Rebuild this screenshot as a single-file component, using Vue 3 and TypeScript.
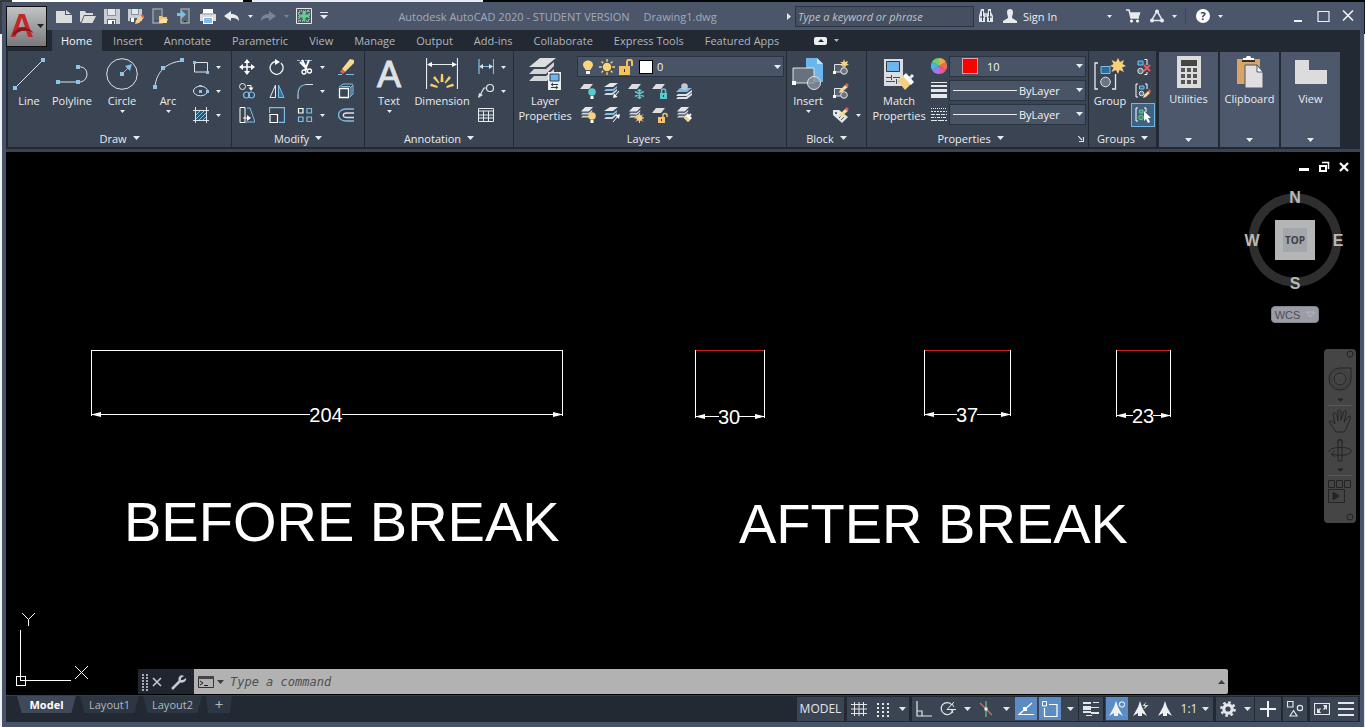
<script setup lang="ts">
import { h, ref } from 'vue'

const Ico = (p: { n: string; s?: number; w?: number }) =>
  h('svg', { width: p.w ?? p.s ?? 16, height: p.s ?? 16, 'aria-hidden': 'true' }, [h('use', { href: '#' + p.n })])
Ico.props = ['n', 's', 'w']

const Tri = (p: { big?: boolean }) =>
  h('svg', { width: p.big ? 7 : 5, height: p.big ? 4 : 3, viewBox: '0 0 8 5', preserveAspectRatio: 'none', 'aria-hidden': 'true' }, [
    h('path', { d: 'M0 0H8L4 5Z', fill: 'currentColor' }),
  ])
Tri.props = { big: Boolean }

const activeTab = ref('Home')
const menuTabs = ['Home', 'Insert', 'Annotate', 'Parametric', 'View', 'Manage', 'Output', 'Add-ins', 'Collaborate', 'Express Tools', 'Featured Apps']

const quick = [
  { n: 'q-new', label: 'New' },
  { n: 'q-open', label: 'Open' },
  { n: 'q-save', label: 'Save' },
  { n: 'q-saveas', label: 'Save As' },
  { n: 'q-web', label: 'Open from Web & Mobile' },
  { n: 'q-toweb', label: 'Save to Web & Mobile' },
  { n: 'q-print', label: 'Plot' },
]
const drawBig = [
  { n: 'd-line', label: 'Line', cls: 'w42', drop: false },
  { n: 'd-pline', label: 'Polyline', cls: 'w44', drop: false },
  { n: 'd-circle', label: 'Circle', cls: 'w56', drop: true },
  { n: 'd-arc', label: 'Arc', cls: 'w36', drop: true },
]
const drawSmall = [
  { n: 'd-rect', label: 'Rectangle' },
  { n: 'd-ellipse', label: 'Ellipse' },
  { n: 'd-hatch', label: 'Hatch' },
]
const modify = [
  { n: 'm-move', label: 'Move', drop: false },
  { n: 'm-rotate', label: 'Rotate', drop: false },
  { n: 'm-trim', label: 'Trim', drop: true },
  { n: 'm-erase', label: 'Erase', drop: false },
  { n: 'm-copy', label: 'Copy', drop: false },
  { n: 'm-mirror', label: 'Mirror', drop: false },
  { n: 'm-fillet', label: 'Fillet', drop: true },
  { n: 'm-explode', label: 'Explode', drop: false },
  { n: 'm-stretch', label: 'Stretch', drop: false },
  { n: 'm-scale', label: 'Scale', drop: false },
  { n: 'm-array', label: 'Array', drop: true },
  { n: 'm-offset', label: 'Offset', drop: false },
]
const layerTools = ['l-off', 'l-isolate', 'l-freeze', 'l-lock', 'l-current', 'l-on', 'l-unisolate', 'l-thaw', 'l-unlock', 'l-match']
const collapsed = [
  { n: 'c-calc', label: 'Utilities' },
  { n: 'c-clip', label: 'Clipboard' },
  { n: 'c-view', label: 'View' },
]
const layouts = ['Model', 'Layout1', 'Layout2']
const activeLayout = ref('Model')

interface Dim { x1: number; x2: number; y: number; text: string; top: string; gap: number }
const dims: Dim[] = [
  { x1: 91, x2: 562, y: 414, text: '204', top: '#fff', gap: 16 },
  { x1: 695, x2: 764, y: 416, text: '30', top: '#c8201e', gap: 10 },
  { x1: 924, x2: 1010, y: 414, text: '37', top: '#c8201e', gap: 10 },
  { x1: 1116, x2: 1170, y: 415, text: '23', top: '#c8201e', gap: 10 },
]
const mid = (d: Dim) => Math.floor((d.x1 + d.x2) / 2)
</script>

<template>
  <svg class="defs" width="0" height="0" aria-hidden="true">
    <defs>
      <symbol id="q-new" viewBox="0 0 16 16"><path d="M0 3H9V7H16V15H0Z" fill="#dcdcdc" /><path d="M10 2L15 6H10Z" fill="#dcdcdc" /></symbol>
      <symbol id="q-open" viewBox="0 0 16 16"><path d="M0 3H5L6 5H13V7H4L1 14H0Z" fill="#dcdcdc" /><path d="M4.500 8H16L12.500 15H1.500Z" fill="#dcdcdc" /></symbol>
      <symbol id="q-save" viewBox="0 0 16 16"><path d="M0 1H16V16H0Z" fill="#c9cdd2" /><path d="M3 1H12V8H3Z" fill="#8a919c" /><path d="M4 1H11V7H4Z" fill="#e4e6e8" /><path d="M3 11H12V16H3Z" fill="#5d6675" /><path d="M4 12H11V16H4Z" fill="#fff" /><path d="M8 13H10V16H8Z" fill="#4a5468" /></symbol>
      <symbol id="q-saveas" viewBox="0 0 16 16"><path d="M0 1H14V13H0Z" fill="#c9cdd2" /><path d="M3 1H11V7H3Z" fill="#8a919c" /><path d="M4 1H10V6H4Z" fill="#e4e6e8" /><path d="M2 10H9V14H2Z" fill="#4d586a" /><path d="M3 10H6V14H3Z" fill="#fff" /><path d="M7 16L8 12.500L13 7L16 9.500L11 15Z" fill="#f6d08a" /><path d="M12.500 7.500L14 6L16.500 8.500L15 10Z" fill="#e8585a" /></symbol>
      <symbol id="q-web" viewBox="0 0 16 16"><path d="M1 1H10V15H1Z" fill="none" stroke="#9aa0a8" stroke-width="1.500" /><path d="M2 2H9V12H2Z" fill="#59616e" /><path d="M7 8H10L11 9H15V15H7Z" fill="#f3c26b" /><path d="M9 11H16L14 15H7Z" fill="#ffe1a0" /></symbol>
      <symbol id="q-toweb" viewBox="0 0 16 16"><path d="M5 1H13V15H5Z" fill="#59616e" stroke="#9aa0a8" stroke-width="1.500" /><path d="M8 13.500H10" stroke="#222" /><path d="M1 5H5V2L10 6.500L5 11V8H1Z" fill="#6fc1f2" /></symbol>
      <symbol id="q-print" viewBox="0 0 16 16"><path d="M3 1H13V5H3Z" fill="#fff" /><path d="M0 6H16V13H0Z" fill="#d9dbde" /><path d="M2 5H14V7H2Z" fill="#b7bbc2" /><path d="M3 9H13V16H3Z" fill="#fff" /><path d="M4 10H12V15H4Z" fill="#7fbde8" /></symbol>
      <symbol id="q-undo" viewBox="0 0 16 16"><path d="M0 8L7 3V6C12 6 15 8 15 13C13 10.500 11 10 7 10V13Z" fill="currentColor" /></symbol>
      <symbol id="q-redo" viewBox="0 0 16 16"><path d="M16 8L9 3V6C4 6 1 8 1 13C3 10.500 5 10 9 10V13Z" fill="currentColor" /></symbol>
      <symbol id="q-preview" viewBox="0 0 16 16"><path d="M.5 .5H15.500V15.500H.5Z" fill="#4b5c60" stroke="#e4e8ea" /><path d="M2 6L6 2M2 11L4 9M11 14L14 11M9 5L13 2M2 14L5 11M12 8L14 6M3 3H13V13H3Z" stroke="#cfd6d8" stroke-dasharray="1 1" fill="none" /><path d="M6.500 3H9.500V6.500H13V9.500H9.500V13H6.500V9.500H3V6.500H6.500Z" fill="#5fce94" /></symbol>
      <symbol id="q-more" viewBox="0 0 10 10"><path d="M1 1H9V2H1ZM1 4H9L5 8Z" fill="#e4e8ee" /></symbol>
      <symbol id="t-find" viewBox="0 0 16 16"><path d="M3 1H6V4L7 6V14H1V8ZM10 1H13V4L15 8V14H9V6L10 4Z" fill="#e2e5ea" /><path d="M7 5H9V9H7Z" fill="#b6bcc8" /><path d="M2 9H6M10 9H14M4.500 3V13M11.500 3V13" stroke="#39424f" /></symbol>
      <symbol id="t-user" viewBox="0 0 16 16"><path d="M5 4C5 0 11 0 11 4C11 7 10 7 10 10L15 13V15H1V13L6 10C6 7 5 7 5 4Z" fill="#e8eaee" /></symbol>
      <symbol id="t-cart" viewBox="0 0 16 16"><path d="M1 2H4L6 10H14M5 5H14.500L13 9H6" fill="none" stroke="#e8eaee" stroke-width="1.500" /><path d="M5 5H15L13 9H6Z" fill="#e8eaee" /><circle cx="6.500" cy="13" r="1.500" fill="#fff" /><circle cx="12.500" cy="13" r="1.500" fill="#fff" /></symbol>
      <symbol id="t-share" viewBox="0 0 16 16"><path d="M8 3L13.500 12.500H2.500Z" fill="none" stroke="#dfe3ea" stroke-width="1.500" /><circle cx="8" cy="3.500" r="2" fill="#e8eaee" /><circle cx="3" cy="12.500" r="2" fill="#e8eaee" /><circle cx="13" cy="12.500" r="2" fill="#e8eaee" /></symbol>
      <symbol id="d-line" viewBox="0 0 32 32"><path d="M2 30L30 2" stroke="#dfe3e8" /><path d="M0 28H4V32H0ZM28 0H32V4H28Z" fill="#8ac6ec" /></symbol>
      <symbol id="d-pline" viewBox="0 0 32 32"><path d="M2 24H21M22 9C34 7 34 25 22 24" stroke="#dfe3e8" fill="none" /><path d="M0 22H4V26H0ZM20 22H24V26H20ZM20 7H24V11H20Z" fill="#8ac6ec" /></symbol>
      <symbol id="d-circle" viewBox="0 0 32 32"><circle cx="16" cy="16" r="15.300" fill="none" stroke="#dfe3e8" /><path d="M16 16L24 8" stroke="#7cc0ea" /><path d="M26 6L24 13L19 8Z" fill="#7cc0ea" /><path d="M14 14H18V18H14Z" fill="#8ac6ec" /></symbol>
      <symbol id="d-arc" viewBox="0 0 32 32"><path d="M3 29C4 14 15 4 30 3" stroke="#dfe3e8" fill="none" /><path d="M1 27H5V31H1ZM9 8H13V12H9ZM28 0H32V4H28Z" fill="#8ac6ec" /></symbol>
      <symbol id="d-rect" viewBox="0 0 16 16"><path d="M2 3.500H14.500V13H1.500V5" fill="none" stroke="#dfe3e8" /><path d="M0 2H3V5H0ZM13 12H16V15H13Z" fill="#8ac6ec" /></symbol>
      <symbol id="d-ellipse" viewBox="0 0 16 16"><ellipse cx="7.500" cy="8" rx="7" ry="4.800" fill="none" stroke="#dfe3e8" /><path d="M6 7H9V10H6ZM6 2H9V4H6ZM13 7H16V10H13Z" fill="#8ac6ec" /></symbol>
      <symbol id="d-hatch" viewBox="0 0 16 16"><path d="M3 4H13V13H3Z" fill="#33566f" /><path d="M3 8L7 4M3 12L11 4M6 13L13 6M10 13L13 10" stroke="#7cc0ea" /><path d="M2.500 0V16M13.500 0V16M0 3.500H16M0 13.500H16" stroke="#dfe3e8" /></symbol>
      <symbol id="m-move" viewBox="0 0 16 16"><path d="M8 2V14M2 8H14" stroke="#fff" stroke-width="1.500" /><path d="M8 0L11 4H5ZM8 16L11 12H5ZM0 8L4 5V11ZM16 8L12 5V11Z" fill="#fff" /></symbol>
      <symbol id="m-rotate" viewBox="0 0 16 16"><path d="M6 2.500A6.500 6.500 0 1 0 12 4" fill="none" stroke="#f2f4f6" stroke-width="1.300" /><path d="M6 0L11 3L6 6Z" fill="#fff" /></symbol>
      <symbol id="m-trim" viewBox="0 0 16 16"><path d="M0 1.500H16" stroke="#7cc0ea" stroke-dasharray="3 1" /><path d="M5 1L10 11M12 1L8 11" stroke="#fff" stroke-width="2" /><circle cx="7" cy="13" r="2" fill="none" stroke="#fff" stroke-width="1.300" /><circle cx="12.500" cy="12" r="2" fill="none" stroke="#fff" stroke-width="1.300" /><path d="M3 3L8 8" stroke="#fff" stroke-width="2" /></symbol>
      <symbol id="m-erase" viewBox="0 0 16 16"><path d="M12 0L16 1L16 4L7 13L4 10Z" fill="#f8d78e" /><path d="M4 10L7 13L5 15L2 13Z" fill="#e8595c" /><path d="M0 15.500H4M8 15.500H16" stroke="#7cc0ea" /></symbol>
      <symbol id="m-copy" viewBox="0 0 16 16"><circle cx="3.500" cy="3.500" r="3" fill="none" stroke="#e8eaee" /><path d="M8 2.500H12V5" stroke="#fff" fill="none" /><path d="M9.500 4.500H14.500L12 8Z" fill="#fff" /><circle cx="7.500" cy="12" r="3" fill="none" stroke="#7cc0ea" stroke-width="1.200" /><circle cx="12.500" cy="12" r="3" fill="none" stroke="#7cc0ea" stroke-width="1.200" /></symbol>
      <symbol id="m-mirror" viewBox="0 0 16 16"><path d="M6.500 2V14.500H1Z" fill="none" stroke="#e8eaee" /><path d="M9.500 2V14.500H15Z" fill="#2d709f" stroke="#7cc0ea" /></symbol>
      <symbol id="m-fillet" viewBox="0 0 16 16"><path d="M1 16V11M8 1.500H16" stroke="#dfe3e8" /><path d="M1 11C1 5 4 2 9 1.500" fill="none" stroke="#7cc0ea" stroke-width="1.200" /></symbol>
      <symbol id="m-explode" viewBox="0 0 16 16"><path d="M1.500 5.500H10.500V14.500H1.500Z" fill="none" stroke="#fff" stroke-width="1.300" /><path d="M1 4L5 1H15M12 5L15 2V11L12 14M3.500 3.500H12M13 4V13" fill="none" stroke="#7cc0ea" /></symbol>
      <symbol id="m-stretch" viewBox="0 0 16 16"><path d="M1 .5H6V15.500H1Z" fill="none" stroke="#fff" /><path d="M8 1H11L16 15H6" fill="none" stroke="#7cc0ea" /><path d="M4 11H8" stroke="#fff" /><path d="M8 8L12 11L8 14Z" fill="#fff" /></symbol>
      <symbol id="m-scale" viewBox="0 0 16 16"><path d="M.5 6V.5H15.500V15.500H10" fill="none" stroke="#7cc0ea" stroke-width="1.300" /><path d="M1 7.500H8.500V15.500H1Z" fill="none" stroke="#fff" stroke-width="1.200" /></symbol>
      <symbol id="m-array" viewBox="0 0 16 16"><path d="M1.500 1.500H6V6H1.500Z" fill="none" stroke="#fff" stroke-width="1.200" /><path d="M10 1.500H14.500V6H10ZM1.500 10H6V14.500H1.500ZM10 10H14.500V14.500H10Z" fill="none" stroke="#7cc0ea" stroke-width="1.200" /></symbol>
      <symbol id="m-offset" viewBox="0 0 16 16"><path d="M16 2H8C-2 2-2 14 8 14H16" fill="none" stroke="#7cc0ea" stroke-width="1.300" /><path d="M16 6H9C4 6 4 10.500 9 10.500H16" fill="none" stroke="#dfe3e8" stroke-width="1.300" /></symbol>
      <symbol id="a-dim" viewBox="0 0 32 32"><path d="M.5 0V31M31.500 0V31" stroke="#e8eaee" stroke-width="1.200" /><path d="M2 6.500H30" stroke="#e8eaee" /><path d="M1 6.500L6 4V9ZM31 6.500L26 4V9Z" fill="#fff" /><path d="M15 16H17L17.500 24H14.500ZM7 20L9 18L13.500 24.500L12.500 25.500ZM25 20L23 18L18.500 24.500L19.500 25.500ZM4 28L5 25.500L11.500 28V30ZM28 28L27 25.500L20.500 28V30Z" fill="#f8cf6c" /></symbol>
      <symbol id="a-lin" viewBox="0 0 16 16"><path d="M1 0V15M15.500 0V15" stroke="#7cc0ea" stroke-width="1.200" /><path d="M2 7.500H14" stroke="#7cc0ea" /><path d="M1 7.500L5 5V10ZM15 7.500L11 5V10Z" fill="#cfe5f5" /></symbol>
      <symbol id="a-lead" viewBox="0 0 16 16"><circle cx="12" cy="5" r="3.500" fill="none" stroke="#dfe3e8" stroke-width="1.200" /><path d="M9 5H6L1 14" fill="none" stroke="#dfe3e8" stroke-width="1.200" /><path d="M0 15L1 10L5 12Z" fill="#dfe3e8" /></symbol>
      <symbol id="a-table" viewBox="0 0 16 16"><path d="M.5 1.500H15.500V14.500H.5ZM0 4H16M0 8H16M0 11H16M5.500 4V15M10.500 4V15" fill="none" stroke="#e8eaee" /></symbol>
      <symbol id="stack" viewBox="0 0 16 16"><path d="M6 0H15L10 5H1Z" fill="#e4e6e9" /><path d="M3 6.500H10L14 3V5L10.500 8.500H1ZM3 10H10L14 6.500V8.500L10.500 12H1Z" fill="#cfd3d8" /></symbol>
      <symbol id="l-props" viewBox="0 0 32 32"><path d="M11 0H27L16 9H0Z" fill="#dededf" /><path d="M5 11H17L25 4V8L17 16H0ZM5 18H17L25 11V15L18 23H0Z" fill="#d2d4d7" /><path d="M19 14H32V32H19Z" fill="#eceded" /><path d="M21 16H30V23H21Z" fill="#6cb8ee" stroke="#303a48" /><path d="M22 26.500H29M22 29.500H29" stroke="#303a48" /><path d="M22 26.500L24 24.500V28.500ZM29 29.500L27 27.500V31.500Z" fill="#303a48" /></symbol>
      <symbol id="l-off" viewBox="0 0 16 16"><path d="M4 1H13L9 6H0Z" fill="#dcdee0" /><circle cx="12" cy="9" r="3.800" fill="#57c9cf" /><path d="M10.500 13H13.500V16H10.500Z" fill="#fff" /></symbol>
      <symbol id="l-isolate" viewBox="0 0 16 16"><path d="M6 0H14L9 4H0Z" fill="#e4e6e9" /><path d="M2 6H9L13 3V5L9.500 8H0Z" fill="#79bdea" /><path d="M2 10H8L13 6V8L8.500 12H0Z" fill="#d5d8dc" /><path d="M15 8L11 13" stroke="#fff" /><path d="M9 15L10 10.500L13.500 14Z" fill="#fff" /></symbol>
      <symbol id="l-freeze" viewBox="0 0 16 16"><path d="M4 1H13L9 6H0Z" fill="#dcdee0" /><path d="M11.500 6V16M7 8.500L16 13.500M7 13.500L16 8.500M9.500 7.500H13.500M9.500 14.500H13.500" stroke="#57c9cf" stroke-width="1.500" /></symbol>
      <symbol id="l-lock" viewBox="0 0 16 16"><path d="M4 1H13L9 6H0Z" fill="#dcdee0" /><path d="M8 10H15V16H8Z" fill="#57c9cf" /><path d="M9.500 10V7.500C9.500 5.500 13.500 5.500 13.500 7.500V10" fill="none" stroke="#57c9cf" stroke-width="1.500" /><path d="M11 12H12V14H11Z" fill="#24343c" /></symbol>
      <symbol id="l-current" viewBox="0 0 16 16"><path d="M4 5H16L11 9H0Z" fill="#79bdea" /><path d="M2 11H10L16 7V9L11 13H0ZM2 14H10L16 10V12L11 16H0Z" fill="#dfe3e8" /><circle cx="8.500" cy="3.500" r="3.300" fill="#c3c9d3" /></symbol>
      <symbol id="l-on" viewBox="0 0 16 16"><use href="#stack" width="14" height="16" y="-1" /><circle cx="12" cy="9" r="3.800" fill="#f8d07c" /><path d="M10.500 13H13.500V16H10.500Z" fill="#fff" /></symbol>
      <symbol id="l-unisolate" viewBox="0 0 16 16"><path d="M6 0H14L9 4H0Z" fill="#e4e6e9" /><path d="M2 6H9L13 3V5L9.500 8H0Z" fill="#79bdea" /><path d="M2 10H8L13 6V8L8.500 12H0Z" fill="#d5d8dc" /><path d="M9 15L14 9" stroke="#fff" /><path d="M16 7L15 12L11.500 8.500Z" fill="#fff" /></symbol>
      <symbol id="l-thaw" viewBox="0 0 16 16"><use href="#stack" width="14" height="16" y="-1" /><path d="M11.500 6V16M6.500 11H16M8 7.500L15 14.500M8 14.500L15 7.500" stroke="#f8d07c" /><circle cx="11.500" cy="11" r="3" fill="#f8d07c" /></symbol>
      <symbol id="l-unlock" viewBox="0 0 16 16"><path d="M4 1H13L9 6H0Z" fill="#dcdee0" /><path d="M6 10H13V16H6Z" fill="#f3c26b" /><path d="M11 10V8C11 6 15 6 15 8V10" fill="none" stroke="#f3c26b" stroke-width="1.500" /><path d="M9 12H10V14H9Z" fill="#24343c" /></symbol>
      <symbol id="l-match" viewBox="0 0 16 16"><use href="#stack" width="14" height="16" y="-1" /><path d="M8 11L12 7L16 11L12 15Z" fill="#fff" /><path d="M8 11L10 9L14 13L12 15Z" fill="#f3cf86" /><path d="M13 9L15 7" stroke="#fff" stroke-width="2" /></symbol>
      <symbol id="s-bulb" viewBox="0 0 16 16"><path d="M3 6C3 0 13 0 13 6C13 8 11 9 10.500 11H5.500C5 9 3 8 3 6Z" fill="#fbd47e" /><path d="M6 12H10V15H6Z" fill="#f3f3f3" /></symbol>
      <symbol id="s-sun" viewBox="0 0 16 16"><path d="M8 0V16M0 8H16M2.500 2.500L13.500 13.500M2.500 13.500L13.500 2.500" stroke="#fbd47e" stroke-width="1.300" /><circle cx="8" cy="8" r="5.300" fill="#3f4959" /><circle cx="8" cy="8" r="4.300" fill="#fbd47e" /></symbol>
      <symbol id="s-unlock" viewBox="0 0 16 16"><path d="M1 7H12V16H1Z" fill="#f5c15c" /><path d="M9 7V3C9 0 14 0 14 3V7" fill="none" stroke="#f5c15c" stroke-width="2" /><path d="M6 10H7V13H6Z" fill="#333" /></symbol>
      <symbol id="b-insert" viewBox="0 0 32 32"><path d="M14 0H25L31 6V24H14Z" fill="#6bb7ec" /><path d="M25 0V6H31Z" fill="#c5e2f7" /><path d="M1 10H22V25H1Z" fill="#69717f" stroke="#dfe3e8" /><circle cx="22" cy="25" r="6.500" fill="#8a919d" fill-opacity=".8" stroke="#dfe3e8" /><path d="M0 23H4V27H0Z" fill="#fff" /></symbol>
      <symbol id="blk" viewBox="0 0 16 16"><path d="M1.500 5.500H10V13H1.500Z" fill="#59616e" stroke="#dfe3e8" /><circle cx="11" cy="12" r="3.300" fill="#6c7481" stroke="#dfe3e8" /><path d="M0 12H3V15H0Z" fill="#fff" /></symbol>
      <symbol id="pencil" viewBox="0 0 16 16"><path d="M6 10L7 7L12 2L15 4L9 9Z" fill="#f8d78e" /><path d="M12 2L13.500 0L16 2L14.500 4Z" fill="#e8595c" /></symbol>
      <symbol id="b-create" viewBox="0 0 16 16"><use href="#blk" width="16" height="16" /><path d="M11 0L12 3L15 2L14 4.500L16 6L13 6.500L12 9L10.500 6.500L8 7L9 4.500L7 3L10 3Z" fill="#f8d07c" /></symbol>
      <symbol id="b-edit" viewBox="0 0 16 16"><use href="#blk" width="16" height="16" /><use href="#pencil" width="16" height="16" /></symbol>
      <symbol id="b-attr" viewBox="0 0 16 16"><path d="M0 3H6L15 10L9 16L0 8Z" fill="#e4e6e9" /><circle cx="3" cy="6" r="1" fill="#333" /><path d="M6 11L9 8M8 13L11 10" stroke="#555" /><use href="#pencil" width="16" height="16" /></symbol>
      <symbol id="p-match" viewBox="0 0 32 32"><path d="M1 1H20V28H1Z" fill="#dcdde0" /><path d="M3.500 3.500H16.500V13.500H3.500Z" fill="#6cb8ee" stroke="#303a48" /><path d="M3 19.500H8M10 19.500H17M3 23.500H12M15 23.500H18M8.500 17V22M13.500 21V26" stroke="#444d5a" /><path d="M14 22L21 18L28 26L22 32Z" fill="#f3cf86" /><path d="M20 18L23 15L31 24L28 27Z" fill="#fff" /><path d="M26 21L30 17" stroke="#e8eaee" stroke-width="3" /></symbol>
      <symbol id="p-wheel" viewBox="0 0 16 16"><path d="M8 8L8 0A8 8 0 0 1 15 4Z" fill="#f3a24e" /><path d="M8 8L15 4A8 8 0 0 1 15 12Z" fill="#ef6b4f" /><path d="M8 8L15 12A8 8 0 0 1 8 16Z" fill="#e25a9c" /><path d="M8 8L8 16A8 8 0 0 1 1 12Z" fill="#a478e8" /><path d="M8 8L1 12A8 8 0 0 1 1 4Z" fill="#43b7ea" /><path d="M8 8L1 4A8 8 0 0 1 8 0Z" fill="#6fce6a" /></symbol>
      <symbol id="p-weight" viewBox="0 0 16 16"><path d="M0 0H16V1H0ZM0 3H16V5H0ZM0 7H16V10H0ZM0 12H16V16H0Z" fill="#e4e6e9" /></symbol>
      <symbol id="p-type" viewBox="0 0 16 16"><path d="M0 2.500H16" stroke="#e4e6e9" stroke-dasharray="1 1" /><path d="M0 5.500H16" stroke="#e4e6e9" stroke-dasharray="2 1" /><path d="M0 8.500H16" stroke="#e4e6e9" stroke-dasharray="4 1" /><path d="M0 11.500H16" stroke="#e4e6e9" stroke-dasharray="3 1 1 1" /><path d="M0 14.500H16" stroke="#e4e6e9" stroke-dasharray="6 1" /></symbol>
      <symbol id="g-group" viewBox="0 0 32 32"><path d="M4 5H1V31H4M18 31H21.500V16" fill="none" stroke="#e8eaee" stroke-width="1.300" /><path d="M7 8.500H16V15.500H7Z" fill="#2d6c9a" stroke="#7cc0ea" /><circle cx="11.500" cy="24" r="4.800" fill="#6c7481" stroke="#dfe3e8" /><path d="M24 0L26 4L30 2L28.500 6L32 8L28 9.500L30 14L25.500 12L24 16L22 12L17.500 14L19.500 9.500L16 8L19.500 6L17.500 2L22 4Z" fill="#f8d07c" /></symbol>
      <symbol id="g-un" viewBox="0 0 16 16"><path d="M3 2H8V6H3Z" fill="#2d6c9a" stroke="#7cc0ea" /><circle cx="5.500" cy="12" r="2.700" fill="#6c7481" stroke="#dfe3e8" /><path d="M9.500 .5H12V6M12 13V15.500H9.500" fill="none" stroke="#fff" /><path d="M9 6L15 12M15 6L9 12" stroke="#e8595c" stroke-width="2" /></symbol>
      <symbol id="g-edit" viewBox="0 0 16 16"><path d="M3 1H1V14H3M10 1H12V6" fill="none" stroke="#fff" /><path d="M4.500 3H9V6H4.500Z" fill="#2d6c9a" stroke="#7cc0ea" /><circle cx="6.500" cy="10.500" r="2.300" fill="#6c7481" stroke="#dfe3e8" /><path d="M8 15L9 12L13 8L15 10L11 14Z" fill="#f8d78e" /><path d="M13 8L14 6L16 8L15 10Z" fill="#e8595c" /></symbol>
      <symbol id="g-sel" viewBox="0 0 16 16"><path d="M3 1H1V14H3M9 1H11V5" fill="none" stroke="#fff" /><path d="M4.500 3H8V6H4.500Z" fill="#2f9960" stroke="#58d093" /><circle cx="6" cy="10.500" r="2.300" fill="#2f9960" stroke="#58d093" /><path d="M9 4L16 11H13L15 15L13 16L11 12L9 14Z" fill="#fff" /></symbol>
      <symbol id="c-calc" viewBox="0 0 32 32"><path d="M4 0H28V32H4Z" fill="#dcdcdd" /><path d="M8 4H24V10H8Z" fill="#454545" /><path d="M8 12H12V16H8ZM14 12H18V16H14ZM20 12H24V16H20ZM8 18H12V22H8ZM14 18H18V22H14ZM20 18H24V22H20ZM8 24H12V28H8ZM14 24H18V28H14ZM20 24H24V28H20Z" fill="#555" /></symbol>
      <symbol id="c-clip" viewBox="0 0 32 32"><path d="M3 3H26V28H3Z" fill="#d8a566" /><path d="M9 4V2H12C12-1 17-1 17 2H20V4Z" fill="#fff" /><path d="M8 4H21V6H8Z" fill="#333" /><path d="M11 9H23L29 15V32H11Z" fill="#dfdfe0" stroke="#4a5468" /><path d="M23 9V16H29Z" fill="#fff" stroke="#4a5468" /></symbol>
      <symbol id="c-view" viewBox="0 0 32 32"><path d="M0 4H14V14H32V28H0Z" fill="#dcdcdd" /></symbol>
      <symbol id="w-min" viewBox="0 0 16 16"><path d="M4 12H12V14H4Z" fill="#eef0f3" /></symbol>
      <symbol id="w-max" viewBox="0 0 16 16"><path d="M3 3.500H14V13.500H3Z" fill="none" stroke="#eef0f3" stroke-width="1.200" /></symbol>
      <symbol id="w-close" viewBox="0 0 16 16"><path d="M3 2.500L13 12.500M13 2.500L3 12.500" stroke="#eef0f3" stroke-width="1.700" /></symbol>
      <symbol id="v-min" viewBox="0 0 12 12"><path d="M1 7H11V10H1Z" fill="#fff" /></symbol>
      <symbol id="v-res" viewBox="0 0 12 12"><path d="M2 5H8V10H2Z" fill="none" stroke="#fff" stroke-width="2" /><path d="M4 1.500H10.500V8" fill="none" stroke="#fff" stroke-width="1.500" /></symbol>
      <symbol id="v-close" viewBox="0 0 12 12"><path d="M2 2L10 10M10 2L2 10" stroke="#fff" stroke-width="2.200" /></symbol>
      <symbol id="k-grid" viewBox="0 0 16 16"><path d="M3.500 1V15M8 1V15M12.500 1V15M0 3.500H16M0 8H16M0 12.500H16" stroke="#e4e6e9" /></symbol>
      <symbol id="k-snap" viewBox="0 0 16 16"><path d="M2 3H14M2 7H14M2 11H14M2 15H14" stroke="#e4e6e9" stroke-width="2" stroke-dasharray="2 3" /></symbol>
      <symbol id="k-ortho" viewBox="0 0 16 16"><path d="M1 0V15H16M1 10H6V15" fill="none" stroke="#e4e6e9" stroke-width="1.200" /></symbol>
      <symbol id="k-polar" viewBox="0 0 16 16"><path d="M12 4A6 6 0 1 0 13 9" fill="none" stroke="#e4e6e9" stroke-width="1.200" /><path d="M16 8.500H7L14 1" fill="none" stroke="#e4e6e9" /><path d="M12 3L14 6M11 8L13 12" stroke="#e4e6e9" /></symbol>
      <symbol id="k-iso" viewBox="0 0 16 16"><path d="M2 2L14 14" stroke="#dc6a6c" stroke-width="1.200" /><path d="M8 0V16" stroke="#65c98e" stroke-width="1.200" /><path d="M6.500 6.500H9.500V9.500H6.500Z" fill="#e9f3ec" /></symbol>
      <symbol id="k-track" viewBox="0 0 16 16"><path d="M16 13.500H1L14 2" fill="none" stroke="#fff" stroke-width="1.200" /><path d="M5 6H9V10H5Z" fill="#fff" /></symbol>
      <symbol id="k-osnap" viewBox="0 0 16 16"><path d="M7 3.500H15V15.500H2.500V7" fill="none" stroke="#fff" stroke-width="1.200" /><path d="M.5 .5H4.500V5H.5Z" fill="none" stroke="#fff" /></symbol>
      <symbol id="k-lw" viewBox="0 0 16 16"><path d="M0 1H8V3H0ZM10 1H16V2H10ZM0 5H8V9H0ZM8 6H16V7H8ZM0 10H8V12H0ZM8 11H16V13H8ZM3 14H9V15H3Z" fill="#e4e6e9" /></symbol>
      <symbol id="k-ann" viewBox="0 0 16 16"><path d="M8 0L10 6L15 15L10 12V15H6V12L1 15L6 6Z" fill="#eef0f2" /></symbol>
      <symbol id="k-annv" viewBox="0 0 16 16"><use href="#k-ann" width="16" height="16" x="-1" /><circle cx="13" cy="3.500" r="2.700" fill="#5b8cc4" stroke="#fff" /></symbol>
      <symbol id="k-anna" viewBox="0 0 16 16"><use href="#k-ann" width="16" height="16" x="-1" /><path d="M14 0L9 5H12L10 9L16 4H12Z" fill="#fff" stroke="#3b4453" stroke-width=".5" /></symbol>
      <symbol id="k-gear" viewBox="0 0 16 16"><circle cx="8" cy="8" r="4.200" fill="none" stroke="#e4e6e9" stroke-width="3.200" /><circle cx="8" cy="8" r="6.600" fill="none" stroke="#e4e6e9" stroke-width="2.500" stroke-dasharray="2.600 2.580" /></symbol>
      <symbol id="k-plus" viewBox="0 0 16 16"><path d="M8 0V16M0 8H16" stroke="#eef0f2" stroke-width="2" /></symbol>
      <symbol id="k-iso2" viewBox="0 0 16 16"><path d="M.5 .5H6V6H.5ZM3 15L6.500 9.500L10 15Z" fill="none" stroke="#e4e6e9" stroke-width="1.200" /><circle cx="13" cy="7" r="2.700" fill="none" stroke="#e4e6e9" stroke-width="1.200" /></symbol>
      <symbol id="k-full" viewBox="0 0 16 16"><path d="M.5 2.500H15.500V13.500H.5Z" fill="none" stroke="#e4e6e9" stroke-width="1.200" /><path d="M13 4V9L11.500 7.500L10 9L9 8L10.500 6.500L9 4ZM3 12V7L4.500 8.500L6 7L7 8L5.500 9.500L7 12Z" fill="#e4e6e9" /></symbol>
      <symbol id="k-menu" viewBox="0 0 16 16"><path d="M0 1H16V3H0ZM0 7H16V9H0ZM0 13H16V15H0Z" fill="#e4e6e9" /></symbol>
    </defs>
  </svg>

  <div class="desk">
    <div class="behind"></div>
    <div class="window">
      <header class="head">
        <button class="app" aria-label="Application menu">
          <svg width="39" height="39" viewBox="0 0 39 39" aria-hidden="true">
            <text x="3" y="30" class="logo-a">A</text>
            <path d="M5 28C10 19 18 17 27 26C19 22 13 23 8 28Z" fill="#8a181b" />
            <path d="M30 17H37L33.500 21Z" fill="#222" />
          </svg>
        </button>
        <div class="title-row">
          <button v-for="q in quick" :key="q.n" class="tb" :aria-label="q.label"><Ico :n="q.n" /></button>
          <button class="tb" aria-label="Undo"><Ico n="q-undo" /></button>
          <button class="dd" aria-label="Undo list"><Tri /></button>
          <button class="tb dim" aria-label="Redo"><Ico n="q-redo" /></button>
          <button class="dd dim" aria-label="Redo list"><Tri /></button>
          <button class="tb" aria-label="Preview"><Ico n="q-preview" /></button>
          <button class="dd wide" aria-label="Customize toolbar"><Ico n="q-more" :s="10" /></button>
          <h1 class="title"><span>Autodesk AutoCAD 2020 - STUDENT VERSION</span><span>Drawing1.dwg</span></h1>
          <button class="dd" aria-label="Collapse search"><svg width="4" height="7" viewBox="0 0 4 7"><path d="M0 0L4 3.500L0 7Z" fill="#e4e8ee" /></svg></button>
          <input class="search" type="text" placeholder="Type a keyword or phrase" aria-label="Search" />
          <button class="tb" aria-label="Find"><Ico n="t-find" /></button>
          <button class="sign"><Ico n="t-user" /><span>Sign In</span><Tri class="end" /></button>
          <button class="tb" aria-label="App Store"><Ico n="t-cart" /></button>
          <button class="tb" aria-label="Connect"><Ico n="t-share" /></button>
          <button class="dd slim" aria-label="Connect menu"><Tri /></button>
          <span class="vr"></span>
          <button class="tb" aria-label="Help"><span class="help">?</span></button>
          <button class="dd slim" aria-label="Help menu"><Tri /></button>
          <div class="winbtns">
            <button aria-label="Minimize"><Ico n="w-min" /></button>
            <button aria-label="Maximize"><Ico n="w-max" /></button>
            <button aria-label="Close"><Ico n="w-close" /></button>
          </div>
        </div>
        <nav class="tabs">
          <button v-for="t in menuTabs" :key="t" :class="{ on: t === activeTab }" @click="activeTab = t">{{ t }}</button>
          <button class="pill-btn" aria-label="Minimize ribbon"><span class="pill"><svg width="6" height="3" viewBox="0 0 6 3"><path d="M0 3L3 0L6 3Z" fill="#222933" /></svg></span></button>
          <button class="dd wide" aria-label="Ribbon options"><Tri /></button>
        </nav>
      </header>

      <div class="ribbon">
        <section class="panel p-draw">
          <div class="body">
            <button v-for="b in drawBig" :key="b.n" class="big" :class="b.cls">
              <Ico :n="b.n" :s="32" /><span>{{ b.label }}</span><Tri v-if="b.drop" />
            </button>
            <div class="grid two">
              <template v-for="b in drawSmall" :key="b.n">
                <button :aria-label="b.label"><Ico :n="b.n" /></button>
                <button :aria-label="b.label + ' options'"><Tri /></button>
              </template>
            </div>
          </div>
          <h2>Draw<Tri big /></h2>
        </section>

        <section class="panel p-modify">
          <div class="body">
            <div class="grid four">
              <template v-for="b in modify" :key="b.n">
                <button :aria-label="b.label"><Ico :n="b.n" /></button>
                <button v-if="b.drop" :aria-label="b.label + ' options'"><Tri /></button>
              </template>
            </div>
          </div>
          <h2>Modify<Tri big /></h2>
        </section>

        <section class="panel p-annot">
          <div class="body">
            <button class="big w48">
              <svg class="spill" width="32" height="32" aria-hidden="true"><text x="16" y="29" text-anchor="middle" class="big-a">A</text></svg>
              <span>Text</span><Tri />
            </button>
            <button class="big w58"><Ico n="a-dim" :s="32" /><span>Dimension</span></button>
            <div class="grid two">
              <button aria-label="Linear"><Ico n="a-lin" /></button><button aria-label="Linear options"><Tri /></button>
              <button aria-label="Leader"><Ico n="a-lead" /></button><button aria-label="Leader options"><Tri /></button>
              <button aria-label="Table"><Ico n="a-table" /></button>
            </div>
          </div>
          <h2>Annotation<Tri big /></h2>
        </section>

        <section class="panel p-layers">
          <div class="body">
            <button class="big w62"><Ico n="l-props" :s="32" /><span>Layer Properties</span></button>
            <div class="layer-side">
              <label class="combo layer-combo">
                <Ico n="s-bulb" /><Ico n="s-sun" /><Ico n="s-unlock" /><i class="sw white"></i>
                <select aria-label="Layer"><option>0</option></select><Tri big />
              </label>
              <div class="grid five">
                <button v-for="n in layerTools" :key="n" :aria-label="n"><Ico :n="n" /></button>
              </div>
            </div>
          </div>
          <h2>Layers<Tri big /></h2>
        </section>

        <section class="panel p-block">
          <div class="body">
            <button class="big w42"><Ico n="b-insert" :s="32" /><span>Insert</span><Tri /></button>
            <div class="grid two">
              <button class="row1" aria-label="Create block"><Ico n="b-create" /></button>
              <button class="row2" aria-label="Edit block"><Ico n="b-edit" /></button>
              <button class="row3" aria-label="Edit attributes"><Ico n="b-attr" /></button>
              <button class="row3" aria-label="Attribute options"><Tri /></button>
            </div>
          </div>
          <h2>Block<Tri big /></h2>
        </section>

        <section class="panel p-props">
          <div class="body">
            <button class="big w64"><Ico n="p-match" :s="32" /><span>Match Properties</span></button>
            <div class="prop-grid">
              <Ico n="p-wheel" />
              <label class="combo"><i class="sw red"></i><select aria-label="Color"><option>10</option></select><Tri big /></label>
              <Ico n="p-weight" />
              <label class="combo"><i class="rule"></i><select class="by" aria-label="Lineweight"><option>ByLayer</option></select><Tri big /></label>
              <Ico n="p-type" />
              <label class="combo"><i class="rule"></i><select class="by" aria-label="Linetype"><option>ByLayer</option></select><Tri big /></label>
            </div>
          </div>
          <h2 class="wide-title">Properties<Tri big />
            <svg class="corner" width="6" height="6" viewBox="0 0 6 6"><path d="M0 0L4 4M5.500 1V5.500H1" fill="none" stroke="#dfe3e8" stroke-width="1.200" /></svg>
          </h2>
        </section>

        <section class="panel p-groups">
          <div class="body">
            <button class="big w42"><Ico n="g-group" :s="32" /><span>Group</span></button>
            <div class="grid one">
              <button aria-label="Ungroup"><Ico n="g-un" /></button>
              <button aria-label="Group edit"><Ico n="g-edit" /></button>
              <button class="sel" aria-label="Group selection"><Ico n="g-sel" /></button>
            </div>
          </div>
          <h2>Groups<Tri big /></h2>
        </section>

        <button v-for="c in collapsed" :key="c.n" class="fold">
          <Ico :n="c.n" :s="32" /><span>{{ c.label }}</span><Tri big class="foot" />
        </button>
      </div>

      <main class="canvas">
        <svg class="drawing" width="100%" height="100%" viewBox="6 152 1354 543" preserveAspectRatio="xMinYMin meet">
          <g v-for="d in dims" :key="d.text">
            <g shape-rendering="crispEdges">
              <rect :x="d.x1" y="350" :width="d.x2 - d.x1" height="1" :fill="d.top" />
              <rect :x="d.x1" y="350" width="1" :height="d.y - 348" fill="#fff" />
              <rect :x="d.x2" y="350" width="1" :height="d.y - 348" fill="#fff" />
              <rect :x="d.x1" :y="d.y" :width="mid(d) - d.gap - d.x1" height="1" fill="#fff" />
              <rect :x="mid(d) + d.gap" :y="d.y" :width="d.x2 - mid(d) - d.gap" height="1" fill="#fff" />
            </g>
            <path :d="`M${d.x1} ${d.y + 0.5}l10 -2.500v5zM${d.x2 + 1} ${d.y + 0.5}l-10 -2.500v5z`" fill="#fff" />
            <text :x="mid(d)" :y="d.y + 8" text-anchor="middle" class="dim-text">{{ d.text }}</text>
          </g>
          <text x="124" y="541" class="caption">BEFORE BREAK</text>
          <text x="739" y="543" class="caption">AFTER BREAK</text>
          <g shape-rendering="crispEdges" stroke="#fff" fill="none">
            <path d="M20.500 630V680.500H71M16.500 676.500H25.500V685.500H16.500Z" />
          </g>
          <path d="M22 613L28.500 619.500L35 613M28.500 619.500V626M75 666L88 679M88 666L75 679" stroke="#fff" fill="none" />
        </svg>

        <div class="doc-btns">
          <button aria-label="Minimize drawing"><Ico n="v-min" :s="12" /></button>
          <button aria-label="Restore drawing"><Ico n="v-res" :s="12" /></button>
          <button aria-label="Close drawing"><Ico n="v-close" :s="12" /></button>
        </div>

        <div class="cube">
          <svg width="110" height="110" viewBox="0 0 110 110">
            <circle cx="55" cy="52" r="42" fill="none" stroke="#2e2e2e" stroke-width="9" />
            <rect x="35" y="32" width="40" height="40" fill="#b4b5b6" />
            <rect x="43" y="40" width="24" height="24" fill="#a3a6aa" />
            <text x="55" y="56" class="top">TOP</text>
            <g class="compass">
              <text x="55" y="15">N</text><text x="55" y="101">S</text>
              <text x="12" y="58">W</text><text x="98" y="58">E</text>
            </g>
          </svg>
          <button class="wcs">WCS<svg width="9" height="7" viewBox="0 0 9 7"><path d="M.5 1H8.500L4.500 6Z" fill="none" stroke="#b4b8c6" /></svg></button>
        </div>

        <div class="navbar">
          <svg width="32" height="174" viewBox="0 0 32 174" fill="none" stroke="#242424">
            <circle cx="26" cy="5" r="3" stroke="#222" /><circle cx="26" cy="168" r="3" stroke="#222" />
            <path d="M27 19V30A11 11 0 1 1 16 19Z" /><circle cx="16" cy="30" r="6" /><circle cx="16" cy="30" r="9" stroke="#3a3a3a" />
            <path d="M14 50H19L16.500 52Z" fill="#222" /><path d="M4 56.500H28M4 126.500H28" stroke="#595959" />
            <path d="M12 83C9 78 7 76 5 73C6 71 8 72 11 75L9 65C10 63 12 64 13 66L14 72L14 62C15 60 17 61 17 63V71L20 62C22 61 23 62 22 65L20 73L25 67C27 67 27 69 26 70C24 75 23 79 20 83Z" />
            <path d="M14 91H18V112H14ZM13 94L16 90L19 94M5 103C5 97 27 97 27 102C27 107 14 107 8 105M11 102L7 105L11 108" />
            <path d="M14 120H19L16.500 122Z" fill="#222" />
            <path d="M4.500 131.500H10.500V138.500H4.500ZM12.500 131.500H18.500V138.500H12.500ZM20.500 131.500H26.500V138.500H20.500ZM4.500 140.500H20.500V153.500H4.500Z" /><path d="M9 143L15 147L9 151Z" fill="#242424" />
          </svg>
        </div>

        <div class="cmd">
          <div class="cmd-left">
            <svg width="6" height="18" viewBox="0 0 6 18"><path d="M1 1V18M5 1V18" stroke="#a9adb3" stroke-width="2" stroke-dasharray="2 1" /></svg>
            <button aria-label="Close command line"><svg width="10" height="10" viewBox="0 0 10 10"><path d="M1 1L9 9M9 1L1 9" stroke="#c5c8cc" stroke-width="1.600" /></svg></button>
            <button aria-label="Customize"><svg width="16" height="16" viewBox="0 0 16 16"><path d="M1 15L9 7" stroke="#c5c8cc" stroke-width="2.500" /><path d="M8 8C6 3 10 0 13 2L10 4V6H12L15 4C16 7 12 10 8 8Z" fill="#c5c8cc" /></svg></button>
          </div>
          <label class="cmd-input">
            <svg width="16" height="12" viewBox="0 0 16 12"><path d="M.5 .5H15.500V11.500H.5Z" fill="none" stroke="#333" /><path d="M0 0H16V3H0Z" fill="#444" /><path d="M2 5L5 7L2 9M6 9.500H10" stroke="#222" fill="none" /></svg>
            <Tri big />
            <input type="text" placeholder="Type a command" aria-label="Command" />
            <Tri class="up" big />
          </label>
        </div>
      </main>

      <footer class="status">
        <div class="layouts">
          <button v-for="l in layouts" :key="l" :class="{ on: l === activeLayout }" @click="activeLayout = l">{{ l }}</button>
          <button class="add" aria-label="New layout">+</button>
        </div>
        <div class="tools">
          <div class="grp"><button class="model">MODEL</button></div>
          <div class="grp g3"><button aria-label="Grid"><Ico n="k-grid" /></button><button aria-label="Snap"><Ico n="k-snap" /></button><button class="d14" aria-label="Snap options"><Tri big /></button></div>
          <div class="grp g3"><button aria-label="Ortho"><Ico n="k-ortho" /></button><button aria-label="Polar"><Ico n="k-polar" /></button><button class="d14" aria-label="Polar options"><Tri big /></button><button aria-label="Isodraft"><Ico n="k-iso" /></button><button class="d16" aria-label="Isodraft options"><Tri big /></button><button class="lit" aria-label="Object tracking"><Ico n="k-track" /></button><button class="lit" aria-label="Object snap"><Ico n="k-osnap" /></button><button class="d16" aria-label="Object snap options"><Tri big /></button></div>
          <div class="grp g1"><button aria-label="Lineweight"><Ico n="k-lw" /></button></div>
          <div class="grp g2"><button class="lit" aria-label="Annotation visibility"><Ico n="k-annv" /></button><button aria-label="Auto scale"><Ico n="k-anna" /></button><button aria-label="Annotation scale"><Ico n="k-ann" /></button><button class="scale">1:1<Tri big /></button></div>
          <div class="grp g3"><button aria-label="Workspace"><Ico n="k-gear" /></button><button class="d14" aria-label="Workspace options"><Tri big /></button></div>
          <div class="grp g1"><button class="d26" aria-label="Annotation monitor"><Ico n="k-plus" /></button></div>
          <div class="grp g2"><button aria-label="Isolate objects"><Ico n="k-iso2" /></button></div>
          <div class="grp g3"><button aria-label="Clean screen"><Ico n="k-full" /></button><button aria-label="Customization"><Ico n="k-menu" /></button></div>
        </div>
      </footer>
    </div>
  </div>
</template>

<style>
html,
body {
  background: #000;
}
</style>

<style scoped>
* {
  box-sizing: border-box;
}
.defs {
  position: absolute;
}
button {
  display: flex;
  align-items: center;
  justify-content: center;
  padding: 0;
  border: 0;
  background: none;
  color: inherit;
  font: inherit;
}
svg {
  display: block;
  flex: none;
}
h1,
h2 {
  margin: 0;
  font: inherit;
}
.desk {
  min-height: 100vh;
  display: flex;
  flex-direction: column;
  font: 11px/15px "Open Sans", "Noto Sans", sans-serif;
  color: #e9ecef;
  background: linear-gradient(#3a3d45 34px, #eef0f3 34px) left / 2px 100% no-repeat, linear-gradient(#15171c 34px, #dfe3ea 34px) right / 1px 100% no-repeat, #000;
}
.behind {
  height: 2px;
  background: linear-gradient(90deg, #35373c 12px, #fff 12px, #fff 243px, #000 243px, #000 252px, #e9ebf2 252px, #e9ebf2 483px, #050608 483px);
}
.window {
  flex: 1;
  display: flex;
  flex-direction: column;
  margin: 0 1px 0 2px;
  padding: 0 4px 5px;
  background: #48536a;
}

/* title bar and menu tabs */
.head {
  display: grid;
  grid-template-columns: 41px minmax(0, 1fr);
  grid-template-rows: 28px 21px;
  background: linear-gradient(#4b566b 28px, #222933 28px);
}
.app {
  grid-row: 1 / 3;
  height: 41px;
  margin-top: 4px;
  border: 1px solid #0d0f12;
  background: linear-gradient(#c3c4c5, #77797c);
}
.logo-a {
  font: bold 33px "Liberation Sans", Arial, sans-serif;
  fill: #c3262b;
}
.title-row {
  display: flex;
  align-items: center;
  padding-left: 5px;
}
.tb {
  width: 24px;
  height: 28px;
}
.dd {
  width: 12px;
  height: 20px;
}
.dd.wide {
  width: 16px;
}
.dd.slim {
  width: 10px;
}
.dim {
  color: #7a8497;
}
.title {
  flex: 1;
  display: flex;
  justify-content: center;
  gap: 14px;
  white-space: nowrap;
  color: #a3aab6;
}
.search {
  width: 179px;
  height: 21px;
  padding: 0 2px;
  border: 1px solid #2b3442;
  background: #454f60;
  color: #e9ecef;
  font: italic 11px/15px "Open Sans", "Noto Sans", sans-serif;
}
.search::placeholder {
  color: #bcc2cb;
  opacity: 1;
}
.sign {
  width: 123px;
  justify-content: flex-start;
  gap: 5px;
  padding: 0 9px 0 4px;
}
.sign .end {
  margin-left: auto;
}
.vr {
  width: 1px;
  height: 16px;
  margin: 0 5px 0 6px;
  background: #3c4657;
}
.help {
  width: 14px;
  height: 14px;
  border-radius: 50%;
  background: #fff;
  color: #2a3a6a;
  font-weight: bold;
  line-height: 14px;
}
.winbtns {
  display: flex;
  margin-left: 60px;
}
.winbtns button {
  width: 25px;
  height: 28px;
}
.tabs {
  display: flex;
  gap: 1px;
  padding-left: 5px;
  color: #b0b5bd;
}
.tabs > button:not(.dd) {
  padding: 0 10px;
}
.tabs > button.on:not(.dd) {
  padding: 0 10px 0 9px;
  background: #3b4453;
  color: #f4f5f7;
}
.tabs > .pill-btn:not(.dd) {
  padding: 0 0 0 24px;
}
.pill {
  display: flex;
  align-items: center;
  justify-content: center;
  width: 13px;
  height: 8px;
  border-radius: 2px;
  background: #eceef0;
}

/* ribbon */
.ribbon {
  display: flex;
  height: 101px;
  padding-left: 2px;
  border-bottom: 3px solid #3b4453;
  background: #222933;
}
.panel {
  display: flex;
  flex-direction: column;
  height: 96px;
  border-right: 1px solid #222933;
  background: #3b4453;
}
.p-draw { width: 224px; }
.p-modify { width: 133px; }
.p-annot { width: 149px; }
.p-layers { width: 273px; }
.p-block { width: 80px; }
.p-props { width: 222px; }
.p-groups { width: 68px; }
.body {
  flex: 1;
  display: flex;
}
.panel h2 {
  position: relative;
  display: flex;
  align-items: center;
  justify-content: center;
  gap: 6px;
  height: 18px;
}
.panel .wide-title {
  padding-right: 14px;
}
.corner {
  position: absolute;
  right: 4px;
  bottom: 5px;
}
.big {
  flex-direction: column;
  justify-content: flex-start;
  padding-top: 7px;
  height: 78px;
}
.big span {
  margin: 3px 0 2px;
}
.w36 { width: 36px; }
.w42 { width: 42px; }
.w44 { width: 44px; }
.w48 { width: 48px; }
.w56 { width: 56px; }
.w58 { width: 58px; }
.w62 { width: 62px; }
.w64 { width: 64px; }
.spill {
  overflow: visible;
}
.big-a {
  font: 36px "Liberation Sans", Arial, sans-serif;
  fill: #dfe1e4;
  stroke: #dfe1e4;
}
.grid {
  display: grid;
  grid-auto-rows: 24px;
  align-content: start;
  padding-top: 4px;
}
.grid.one {
  grid-template-columns: 24px;
}
.grid.two {
  grid-template-columns: 24px 10px;
  padding-left: 3px;
}
.p-block .two {
  padding-left: 0;
}
.grid.four {
  grid-template-columns: 30px 30px 26px 8px 40px;
}
.grid.four > button:nth-child(5n) {
  justify-self: center;
}
.grid.five {
  grid-template-columns: repeat(5, 24px);
  padding-top: 2px;
}
.row1 { grid-row: 1; }
.row2 { grid-row: 2; }
.row3 { grid-row: 3; }
.sel {
  border: 1px solid #6fb6ea;
  background: #42617e;
}
.layer-side {
  display: flex;
  flex-direction: column;
  flex: 1;
  padding: 5px 2px 0 0;
}
.combo {
  display: flex;
  align-items: center;
  height: 21px;
  padding-right: 2px;
  border: 1px solid #2a3340;
  background: #4a5467;
}
.layer-combo {
  gap: 3px;
  padding-left: 2px;
  margin-left: 1px;
}
.layer-combo select {
  padding-left: 1px;
}
.sw {
  width: 14px;
  height: 14px;
  flex: none;
}
.white {
  border: 1px solid #000;
  background: #fff;
  margin-left: 2px;
}
.red {
  width: 16px;
  height: 16px;
  margin: 0 9px 0 12px;
  border: 1px solid #d9a8a8;
  background: #f00;
}
.rule {
  width: 64px;
  height: 1px;
  flex: none;
  margin: 0 2px 0 3px;
  background: #e8eaee;
}
select {
  flex: 1;
  min-width: 0;
  appearance: none;
  border: 0;
  padding: 0;
  background: transparent;
  color: #f2f4f6;
  font: inherit;
}
.prop-grid {
  flex: 1;
  display: grid;
  grid-template-columns: 18px 1fr;
  grid-auto-rows: 24px;
  align-content: start;
  align-items: center;
  padding: 3px 2px 0 0;
}
.fold {
  flex-direction: column;
  justify-content: flex-start;
  width: 59px;
  height: 95px;
  margin: 1px 0 0 2px;
  padding: 4px 0 5px;
  background: #4d586c;
}
.fold span {
  margin-top: 3px;
}
.foot {
  margin-top: auto;
}

/* drawing area */
.canvas {
  position: relative;
  flex: 1;
  background: #000;
}
.drawing {
  position: absolute;
  inset: 0;
}
.dim-text {
  font: 20px "Liberation Sans", Arial, sans-serif;
  fill: #fff;
}
.caption {
  font: 56px "Liberation Sans", Arial, sans-serif;
  fill: #fff;
}
.doc-btns {
  position: absolute;
  top: 9px;
  right: 10px;
  display: flex;
  gap: 8px;
}
.cube {
  position: absolute;
  top: 36px;
  right: 10px;
  display: flex;
  flex-direction: column;
  align-items: center;
  gap: 8px;
}
.top {
  font: bold 10px "Open Sans", sans-serif;
  text-anchor: middle;
  fill: #3e4044;
}
.compass text {
  font: bold 16px "Liberation Sans", Arial, sans-serif;
  text-anchor: middle;
  fill: #b9b9b9;
}
.wcs {
  gap: 6px;
  width: 48px;
  height: 17px;
  border-radius: 4px;
  border: 1px solid #83858e;
  background: #9b9da6;
  color: #4b4d55;
  font: 11px "Liberation Sans", Arial, sans-serif;
}
.navbar {
  position: absolute;
  top: 197px;
  right: 4px;
  border-radius: 4px;
  background: #454545;
}
.cmd {
  position: absolute;
  left: 132px;
  right: 132px;
  bottom: 1px;
  height: 25px;
  display: flex;
}
.cmd-left {
  display: flex;
  align-items: center;
  gap: 4px;
  width: 56px;
  padding-left: 4px;
  background: #20262f;
}
.cmd-left button:last-child {
  margin-left: 5px;
}
.cmd-input {
  flex: 1;
  display: flex;
  align-items: center;
  gap: 3px;
  padding: 0 3px 0 4px;
  border-radius: 0 2px 2px 0;
  background: #b2b2b2;
  color: #3d3d3d;
}
.cmd-input input {
  flex: 1;
  padding: 0 0 0 2px;
  margin-left: 1px;
  border: 0;
  background: transparent;
  font: italic 12px "DejaVu Sans Mono", "Liberation Mono", monospace;
  color: #333;
}
.cmd-input input::placeholder {
  color: #4f4f4f;
  opacity: 1;
}
.up {
  rotate: 180deg;
}

/* layout tabs and status bar */
.status {
  display: flex;
  justify-content: space-between;
  height: 27px;
  border-top: 1px solid #353e4b;
  background: #222933;
}
.layouts {
  display: flex;
  gap: 4px;
  height: 17px;
  padding-left: 11px;
  color: #b3b8c0;
}
.layouts button {
  width: 59px;
  clip-path: polygon(0 0, 100% 0, 92% 100%, 8% 100%);
  background: #2d3643;
}
.layouts .on {
  background: #3f495a;
  color: #fff;
  font-weight: bold;
}
.layouts .add {
  width: 26px;
  font-size: 15px;
}
.tools {
  display: flex;
  padding: 1px 2px 0 0;
  color: #e4e6e9;
}
.grp {
  display: flex;
  height: 24px;
  background: #3b4453;
}
.grp button {
  width: 24px;
  height: 23px;
}
.g1 { margin-left: 1px; }
.g2 { margin-left: 2px; }
.g3 { margin-left: 3px; }
.grp .model {
  width: 47px;
  font-size: 12px;
}
.grp .d14 { width: 14px; }
.grp .d16 { width: 16px; }
.grp .d26 { width: 26px; }
.grp .scale {
  width: 36px;
  gap: 5px;
  font-size: 12px;
}
.grp .lit {
  background: #5b8cc4;
  border-left: 1px solid #3b4453;
  border-right: 1px solid #3b4453;
}
</style>
